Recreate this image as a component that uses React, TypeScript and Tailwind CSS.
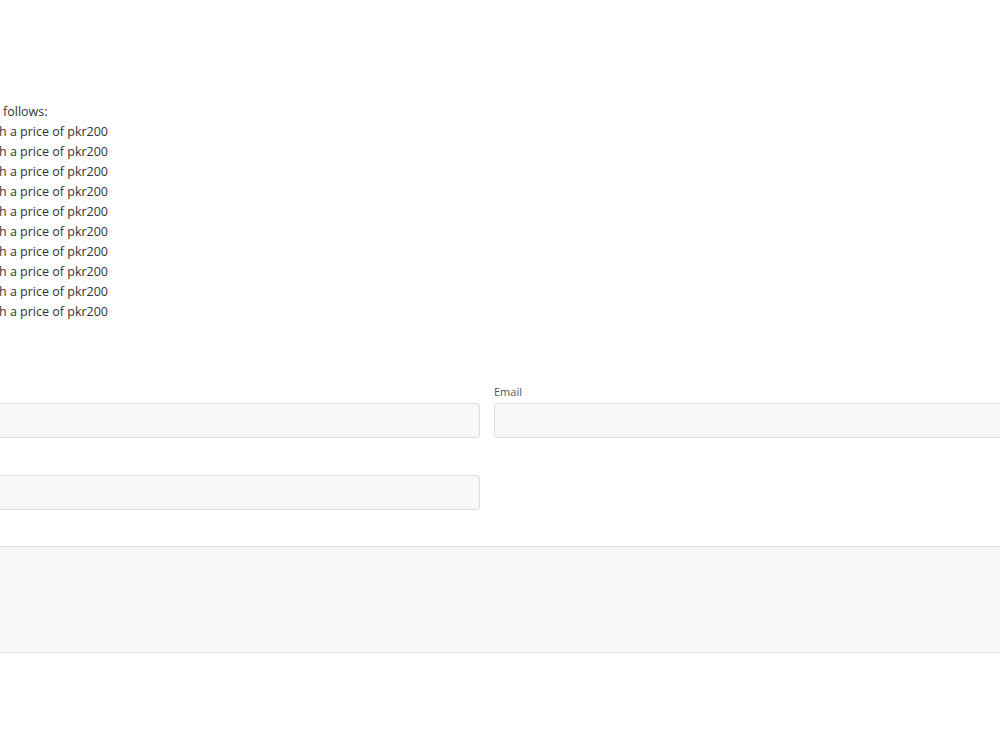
import React from "react";

export default function App() {
  const lines = Array.from({ length: 10 });
  return (
    <div
      className="w-[1000px] h-[750px] overflow-hidden bg-white text-[#333]"
      style={{ fontFamily: '"Open Sans", "Noto Sans", sans-serif' }}
    >
      <div className="-ml-[20px] w-[1040px] pt-[102px]">
        <div className="pl-[20px] text-[12.5px] leading-[20px] text-[#333]">
          <div className="pl-[3px]">follows:</div>
          {lines.map((_, i) => (
            <div key={i} className="-ml-[1px]">h a price of pkr200</div>
          ))}
        </div>

        <div className="mt-[59px] grid grid-cols-[500px_1fr] gap-x-[14px]">
          <div className="flex flex-col">
            <div className="h-[22px]" />
            <input aria-label="Name" className="h-[35px] rounded-[3px] border border-[#dedede] bg-[#f8f8f8] outline-none" />
          </div>
          <div className="flex flex-col">
            <label className="h-[22px] pt-[3px] text-[11px] leading-[16px] text-[#555]">Email</label>
            <input className="h-[35px] rounded-[3px] border border-[#dedede] bg-[#f8f8f8] outline-none" />
          </div>
        </div>

        <div className="mt-[15px] grid grid-cols-[500px_1fr] gap-x-[14px]">
          <div className="flex flex-col">
            <div className="h-[22px]" />
            <input aria-label="Phone" className="h-[35px] rounded-[3px] border border-[#dedede] bg-[#f8f8f8] outline-none" />
          </div>
          <div />
        </div>

        <div className="mt-[36px]">
          <textarea className="block h-[107px] w-full resize-none rounded-[3px] border border-[#dedede] bg-[#f8f8f8] outline-none" />
        </div>
      </div>
    </div>
  );
}
